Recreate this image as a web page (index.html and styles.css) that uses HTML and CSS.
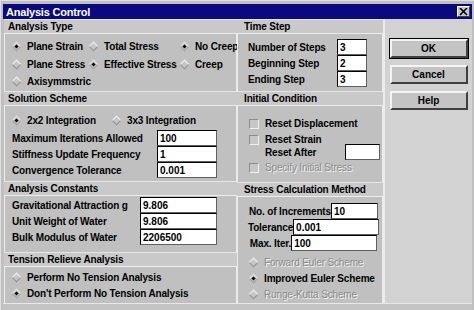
FILE: index.html
```html
<!DOCTYPE html>
<html lang="en">
<head>
  <meta charset="UTF-8">
  <title>Analysis Control</title>
  <link rel="stylesheet" href="styles.css">
</head>
<body>
<div class="window">
  <div class="titlebar">
    <span class="title">Analysis Control</span>
    <span class="close"><svg width="9" height="8" viewBox="0 0 9 8"><path d="M1 0 L8 7 M8 0 L1 7" stroke="#000" stroke-width="1.6"/></svg></span>
  </div>

  <div class="content">
    <div class="col left">
      <div class="panel p-type">
        <div class="head">Analysis Type</div>
        <div class="body type-grid">
          <label class="opt"><span class="dia on"></span>Plane Strain</label>
          <label class="opt"><span class="dia"></span>Total Stress</label>
          <label class="opt"><span class="dia on"></span>No Creep</label>
          <label class="opt"><span class="dia"></span>Plane Stress</label>
          <label class="opt"><span class="dia on"></span>Effective Stress</label>
          <label class="opt"><span class="dia"></span>Creep</label>
          <label class="opt"><span class="dia"></span>Axisymmstric</label>
        </div>
      </div>

      <div class="panel p-scheme">
        <div class="head">Solution Scheme</div>
        <div class="body">
          <div class="radio-row">
            <label class="opt w-int"><span class="dia on"></span>2x2 Integration</label>
            <label class="opt"><span class="dia"></span>3x3 Integration</label>
          </div>
          <div class="fields f-scheme">
            <span>Maximum Iterations Allowed</span><div class="box">100</div>
            <span>Stiffness Update Frequency</span><div class="box">1</div>
            <span>Convergence Tolerance</span><div class="box">0.001</div>
          </div>
        </div>
      </div>

      <div class="panel p-const">
        <div class="head">Analysis Constants</div>
        <div class="body">
          <div class="fields f-const">
            <span>Gravitational Attraction g</span><div class="box">9.806</div>
            <span>Unit Weight of Water</span><div class="box">9.806</div>
            <span>Bulk Modulus of Water</span><div class="box">2206500</div>
          </div>
        </div>
      </div>

      <div class="panel p-tension">
        <div class="head">Tension Relieve Analysis</div>
        <div class="body list">
          <label class="opt"><span class="dia"></span>Perform No Tension Analysis</label>
          <label class="opt"><span class="dia on"></span>Don't Perform No Tension Analysis</label>
        </div>
      </div>
    </div>

    <div class="col right">
      <div class="panel p-time">
        <div class="head">Time Step</div>
        <div class="body">
          <div class="fields f-time">
            <span>Number of Steps</span><div class="box">3</div>
            <span>Beginning Step</span><div class="box">2</div>
            <span>Ending Step</span><div class="box">3</div>
          </div>
        </div>
      </div>

      <div class="panel p-init">
        <div class="head">Initial Condition</div>
        <div class="body">
          <label class="chk c-disp"><span class="cb"></span>Reset Displacement</label>
          <div class="strain">
            <label class="chk"><span class="cb"></span>Reset Strain</label>
            <div class="after">
              <span>Reset After</span><div class="box small"></div>
            </div>
          </div>
          <label class="chk off"><span class="cb"></span>Specify Initial Stress</label>
        </div>
      </div>

      <div class="panel p-stress">
        <div class="head">Stress Calculation Method</div>
        <div class="body">
          <div class="fields f-stress">
            <div class="frow"><span>No. of Increments</span><div class="box b-inc">10</div></div>
            <div class="frow"><span>Tolerance</span><div class="box">0.001</div></div>
            <div class="frow"><span>Max. Iter.</span><div class="box">100</div></div>
          </div>
          <div class="list methods">
            <label class="opt off"><span class="dia"></span>Forward Euler Scheme</label>
            <label class="opt"><span class="dia on"></span>Improved Euler Scheme</label>
            <label class="opt off"><span class="dia"></span>Runge-Kutta Scheme</label>
          </div>
        </div>
      </div>
    </div>

    <div class="side">
      <button class="btn default">OK</button>
      <button class="btn">Cancel</button>
      <button class="btn">Help</button>
    </div>
  </div>
  <div class="foot"></div>
</div>
</body>
</html>
```

FILE: styles.css
```css
* { box-sizing: border-box; }
body { margin: 0; background: #c0c0c0; font-family: "Liberation Sans", Arial, sans-serif; font-size: 10px; font-weight: bold; color: #000; letter-spacing: -0.15px; }
.window { width: 474px; height: 310px; padding: 3px 2px 0 2px; border-left: 1px solid #e0e0e0; border-top: 1px solid #e0e0e0; background: #c0c0c0; overflow: hidden; }
.titlebar { height: 15px; background: #0a0a80; display: flex; align-items: center; justify-content: space-between; padding: 0 2px 0 3px; }
.title { color: #fff; font-size: 11px; letter-spacing: -0.2px; }
.close { width: 13px; height: 11px; background: #c8c8c8; border: 1px solid; border-color: #fff #404040 #404040 #fff; display: flex; align-items: center; justify-content: center; }

.content { display: flex; height: 284px; padding-left: 1px; }
.col { display: flex; flex-direction: column; }
.left { width: 233px; }
.right { width: 146px; }
.side { width: 89px; background: #d2d2d2; border-left: 2px solid #ececec; display: flex; flex-direction: column; align-items: center; padding-top: 20px; gap: 7px; }

.panel { display: flex; flex-direction: column; }
.head { height: 14px; line-height: 14px; padding-left: 4px; background: #c9c9c9; border-top: 1px solid #e6e6e6; }
.right .head { padding-left: 7px; }
.body { flex: 1; border-top: 1px solid #ececec; border-left: 1px solid #ececec; border-right: 1px solid #ececec; }
.p-type { height: 72px; }
.p-scheme { height: 90px; }
.p-const { height: 71px; }
.p-tension { height: 51px; }
.p-time { height: 72px; }
.p-init { height: 91px; }
.p-stress { height: 121px; }

.opt { display: flex; align-items: center; height: 17px; white-space: nowrap; }
.dia { width: 7px; height: 7px; margin: 0 7px 0 8px; transform: rotate(45deg); border: 1px solid; border-color: #f4f4f4 #909090 #909090 #f4f4f4; background: #c4c4c4; position: relative; flex: none; }
.dia.on { border-color: #e4e4e4 #a0a0a0 #a0a0a0 #e4e4e4; }
.dia.on::after { content: ""; position: absolute; left: 1px; top: 1px; width: 3px; height: 3px; background: #000; }
.off { color: #8a8a8a; font-weight: normal; text-shadow: 1px 1px 0 #f4f4f4; }

.type-grid { display: grid; grid-template-columns: 77px 91px auto; padding-top: 4px; }
.radio-row { display: flex; margin-top: 6px; height: 16px; }
.w-int { width: 100px; }

.fields { display: grid; align-items: center; }
.fields span { padding-left: 7px; }
.box { height: 16px; background: #fff; border: 1px solid #000; border-right-color: #606060; border-bottom-color: #606060; padding: 1px 0 0 2px; line-height: 13px; letter-spacing: 0; }
.f-scheme { grid-template-columns: 152px 60px; margin-top: 2px; }
.f-const { grid-template-columns: 135px 77px; margin-top: 1px; }
.f-time { grid-template-columns: 99px 30px; margin-top: 5px; }
.f-time span { padding-left: 10px; }

.chk { display: flex; align-items: center; height: 15px; white-space: nowrap; }
.cb { width: 10px; height: 10px; margin: 0 6px 0 11px; border: 1px solid; border-color: #8c8c8c #f0f0f0 #f0f0f0 #8c8c8c; background: #c6c6c6; flex: none; }
.c-disp { margin-top: 10px; }
.strain { margin-top: 1px; }
.after { display: flex; align-items: center; justify-content: space-between; padding-left: 27px; padding-right: 2px; margin-top: -3px; height: 16px; }
.box.small { width: 35px; }

.f-stress { display: flex; flex-direction: column; margin-top: 6px; }
.frow { display: flex; align-items: center; justify-content: space-between; padding-right: 2px; height: 16px; }
.f-stress span { padding-left: 9px; }
.f-stress .box { width: 86px; }
.f-stress .box.b-inc { width: 47px; }
.methods { margin-top: 1px; }
.methods .dia { margin-left: 12px; }

.list { padding-top: 2px; }
.list .opt { height: 16px; }

.btn { width: 78px; height: 19px; font: inherit; letter-spacing: 0; background: #c4c4c4; border: 2px solid; border-color: #f4f4f4 #404040 #404040 #f4f4f4; padding: 0; }
.btn.default { outline: 1px solid #000; }
.foot { height: 8px; border-top: 1px solid #e8e8e8; background: #c4c4c4; }
```
